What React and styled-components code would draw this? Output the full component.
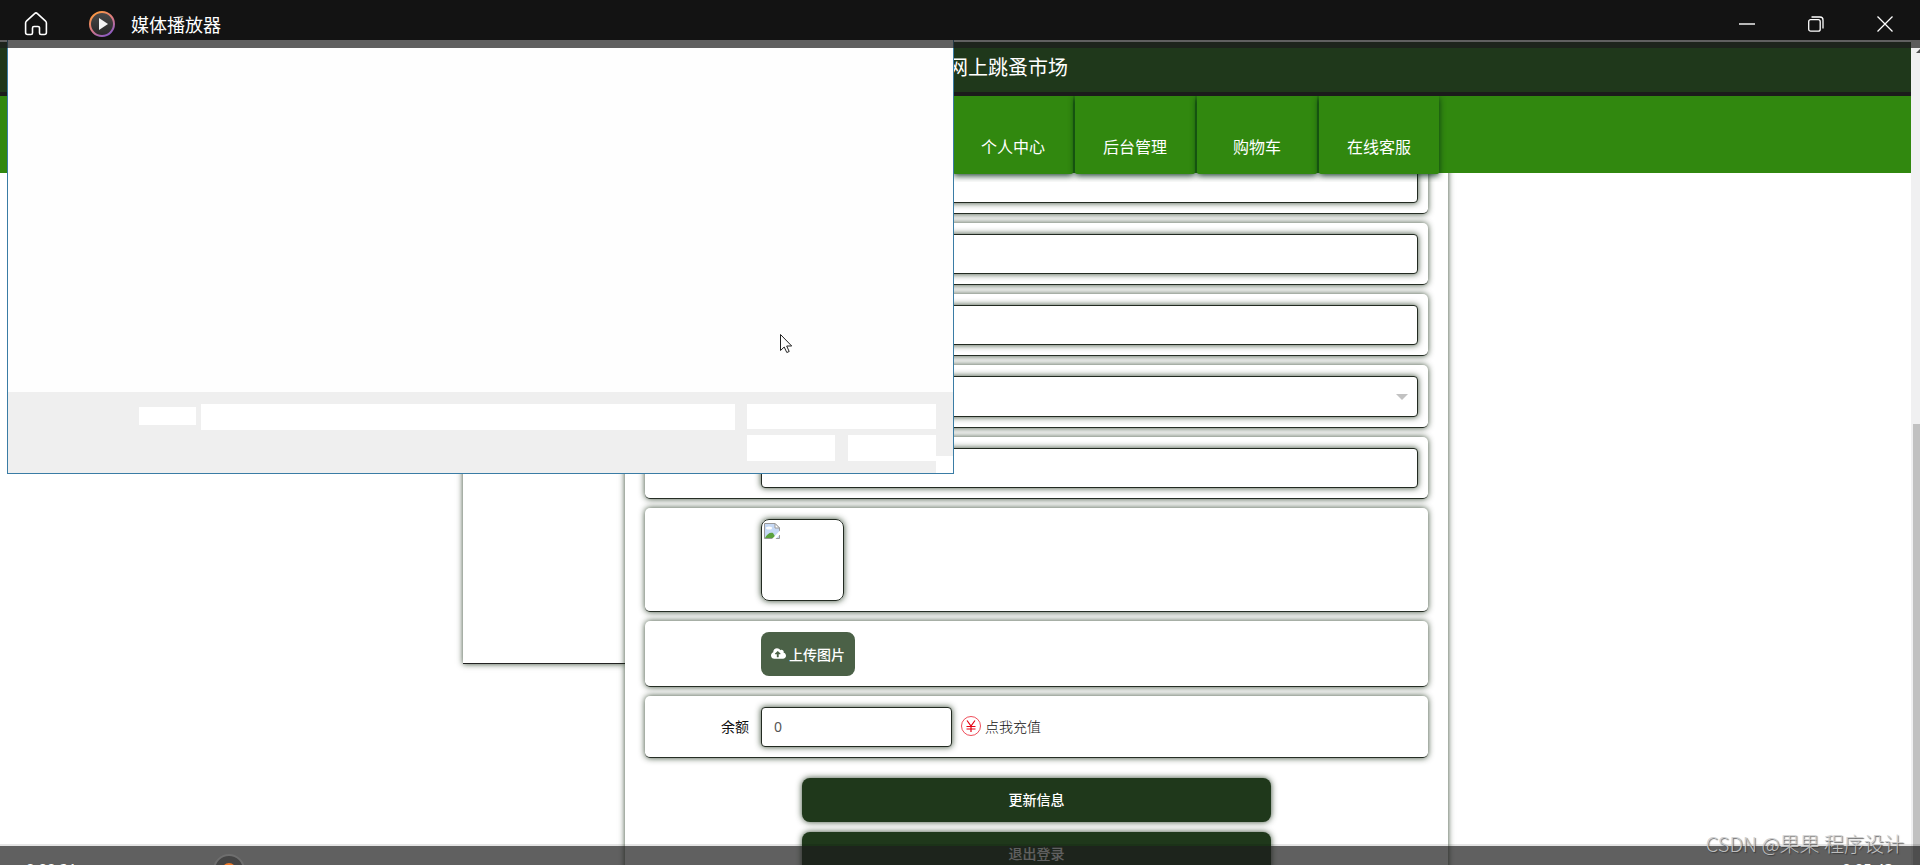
import styled, { createGlobalStyle } from "styled-components";
import { FaCloudUploadAlt } from "react-icons/fa";

const GlobalStyle = createGlobalStyle`
  * {
    box-sizing: border-box;
  }

  body {
    margin: 0;
    background: #131313;
    font-family: "Noto Sans", "Noto Sans CJK SC", sans-serif;
  }

  button, input, select {
    font-family: inherit;
  }
`;

const shadow = "0 0 6px rgba(20, 42, 17, 0.85)";

const Player = styled.div`
  display: flex;
  flex-direction: column;
  height: 100vh;
  overflow: hidden;
`;

const TitleBar = styled.header`
  display: flex;
  align-items: center;
  flex: none;
  height: 40px;
  padding-right: 1px;
  background: #131313;
  color: #fff;
`;

const IconButton = styled.button`
  display: grid;
  place-items: center;
  width: ${({ $wide }) => ($wide ? "69px" : "72px")};
  height: 40px;
  padding: ${({ $wide }) => ($wide ? "7px 0 0" : "8px 0 0")};
  border: none;
  background: none;
  color: #fff;
`;

const AppIcon = styled.svg`
  margin: 8px 16px 0 17px;
`;

const AppName = styled.h1`
  flex: 1;
  margin: 0;
  padding-top: 8px;
  font-family: "Noto Sans CJK SC", sans-serif;
  font-size: 18px;
  font-weight: 400;
  line-height: 30px;
`;

const Video = styled.main`
  position: relative;
  display: flex;
  flex: 1;
  min-height: 0;
  overflow: hidden;
  background: #fff;
`;

const Page = styled.div`
  flex: 1;
  padding-top: 2px;
  background: #fff;
`;

const ScrollTrack = styled.div`
  display: flex;
  flex-direction: column;
  justify-content: space-between;
  width: 9px;
  padding: 9px 0 0 2px;
  background: #f0f0f1;
`;

const ScrollArrow = styled.svg`
  align-self: flex-end;
`;

const ScrollThumb = styled.div`
  height: 54%;
  background: #c1c1c1;
`;

const SiteHeader = styled.header`
  display: flex;
  justify-content: center;
  height: 54px;
  border-bottom: 4px solid #1b1c1b;
  background: #1f381b;
`;

const SiteTitle = styled.h2`
  width: 225px;
  margin: 0;
  color: #fff;
  font-family: "Noto Sans CJK SC", sans-serif;
  font-size: 20px;
  font-weight: 400;
  line-height: 50px;
  text-align: right;
`;

const Nav = styled.nav`
  position: relative;
  z-index: 1;
  height: 77px;
  background: #31880f;
`;

const NavList = styled.ul`
  display: flex;
  justify-content: flex-end;
  gap: 2px;
  max-width: 967px;
  margin: 0 auto;
  padding: 0;
  list-style: none;
`;

const NavLink = styled.a`
  display: block;
  width: 120px;
  height: 78px;
  padding-top: 35px;
  border-radius: 0 0 2px 2px;
  background: #31880f;
  box-shadow: 0 2px 6px rgba(0, 40, 20, 0.85);
  clip-path: inset(0 -8px -8px -8px);
  color: #fff;
  font-family: "Noto Sans CJK SC", sans-serif;
  font-size: 16px;
  line-height: 30px;
  text-align: center;
  text-decoration: none;
`;

const Content = styled.div`
  display: flex;
  align-items: flex-start;
  max-width: 985px;
  margin: -21px auto 0;
`;

const Sidebar = styled.aside`
  flex: 1;
  height: 512px;
  border-bottom: 1px solid #222;
  box-shadow: ${shadow};
`;

const Panel = styled.section`
  position: relative;
  width: 823px;
  padding: 0 20px 60px;
  background: #fff;
  box-shadow: ${shadow};
`;

const Form = styled.form`
  display: flex;
  flex-direction: column;
  gap: 9px;
`;

const Row = styled.div`
  display: flex;
  align-items: center;
  padding: 11px 10px 10px 0;
  border-bottom: 1px solid #262e25;
  border-radius: 5px;
  background: #fff;
  box-shadow: ${shadow};
`;

const Label = styled.label`
  flex: none;
  width: 116px;
  padding: 0 12px 2px 0;
  color: #111;
  font-family: "Noto Sans CJK SC", sans-serif;
  font-size: 14px;
  line-height: 20px;
  text-align: right;
`;

const Field = styled.input`
  flex: ${({ $short }) => ($short ? "none" : "1")};
  width: 191px;
  height: 40px;
  padding: 0 12px 2px;
  border: 1px solid #222a21;
  border-radius: 4px;
  outline: none;
  background: #fff;
  box-shadow: ${shadow};
  color: #555;
  font-size: 14px;
`;

const SelectBox = styled.div`
  display: grid;
  flex: 1;
  align-items: center;
`;

const Select = styled.select`
  grid-area: 1 / 1;
  width: 100%;
  height: 41px;
  border: 1px solid #222a21;
  border-radius: 4px;
  appearance: none;
  background: #fff;
  box-shadow: ${shadow};
`;

const Caret = styled.svg`
  grid-area: 1 / 1;
  justify-self: end;
  margin-right: 10px;
  pointer-events: none;
`;

const Avatar = styled.div`
  width: 83px;
  height: 82px;
  padding: 2px;
  border: 1px solid #222a21;
  border-radius: 8px;
  box-shadow: ${shadow};
`;

const UploadButton = styled.button`
  display: flex;
  align-items: center;
  justify-content: center;
  gap: 3px;
  width: 94px;
  height: 44px;
  padding: 0 0 1px;
  border: none;
  border-radius: 8px;
  background: #4b6147;
  color: #fff;
  font-family: "Noto Sans CJK SC", sans-serif;
  font-size: 14px;
  font-weight: 500;
`;

const Recharge = styled.a`
  display: flex;
  align-items: center;
  gap: 4px;
  margin-left: 9px;
  padding-bottom: 2px;
  color: #111;
  font-family: "Noto Sans CJK SC", sans-serif;
  font-size: 14px;
  font-weight: 300;
  line-height: 20px;
  text-decoration: none;
`;

const Actions = styled.div`
  display: flex;
  flex-direction: column;
  align-items: center;
  gap: 10px;
  padding-top: 11px;
`;

const ActionButton = styled.button`
  width: 60%;
  height: 44px;
  padding: 0 0 2px;
  border: none;
  border-radius: 8px;
  background: #1f381b;
  box-shadow: ${shadow};
  color: #fff;
  font-family: "Noto Sans CJK SC", sans-serif;
  font-size: 14px;
  font-weight: 500;
`;

// The native file picker, floating over the page
const Picker = styled.section`
  position: absolute;
  top: 0;
  left: 7px;
  z-index: 2;
  display: flex;
  flex-direction: column;
  justify-content: flex-end;
  width: 947px;
  height: 434px;
  border: 1px solid #3a7ca5;
  border-top: none;
  background: #fefefe;
`;

const PickerFooter = styled.div`
  display: flex;
  align-items: flex-start;
  height: 81px;
  padding: 12px 17px 0 131px;
  background: #efefef;
`;

const PickerLabel = styled.label`
  width: 57px;
  height: 18px;
  margin: 3px 5px 0 0;
  background: #fff;
`;

const PickerInput = styled.input`
  flex: 1;
  height: 26px;
  margin-right: 12px;
  padding: 0;
  border: none;
  background: #fff;
`;

const PickerActions = styled.div`
  display: grid;
  grid-template-columns: 88px 88px;
  gap: 6px 13px;
`;

const PickerSelect = styled.select`
  grid-column: span 2;
  height: 25px;
  border: none;
  appearance: none;
  background: #fff;
`;

const PickerButton = styled.button`
  height: 26px;
  border: none;
  background: #fff;
`;

const Grip = styled.div`
  position: absolute;
  right: 0;
  bottom: 0;
  width: 17px;
  height: 17px;
  background: #fff;
`;

const Cursor = styled.svg`
  position: absolute;
  top: 294px;
  left: 780px;
  z-index: 3;
`;

const TopShade = styled.div`
  position: absolute;
  inset: 0 0 auto;
  z-index: 4;
  height: 8px;
  background: rgba(28, 29, 28, 0.7);
`;

const Controls = styled.footer`
  position: absolute;
  inset: auto 0 0;
  z-index: 4;
  display: flex;
  justify-content: space-between;
  height: 21px;
  padding: 12px 27px 0 26px;
  overflow: hidden;
  border-top: 2px solid rgba(0, 0, 0, 0.1);
  background: rgba(28, 28, 28, 0.7);
  background-clip: padding-box;
  color: #fff;
  font-family: "Open Sans", sans-serif;
  font-size: 15px;
  line-height: 20px;
`;

const SeekThumb = styled.svg`
  position: absolute;
  top: 8px;
  left: 213px;
`;

const Watermark = styled.div`
  position: absolute;
  right: 16px;
  bottom: 7px;
  z-index: 5;
  color: rgba(205, 205, 205, 0.9);
  font-family: "Noto Sans CJK SC", sans-serif;
  font-size: 20px;
  font-weight: 300;
  line-height: 28px;
  text-shadow: 1px 1px 1px rgba(50, 50, 50, 0.75);
`;

const navItems = ["个人中心", "后台管理", "购物车", "在线客服"];

function HomeIcon() {
  return (
    <svg width="24" height="24" viewBox="0 0 24 24" fill="none" stroke="#fff" strokeWidth="1.6" strokeLinejoin="round">
      <path d="M10.6 1.6a2 2 0 0 1 2.8 0l8.2 7.6c.5.5.8 1.1.8 1.8v9.5a2 2 0 0 1-2 2H17a1.5 1.5 0 0 1-1.5-1.5v-5a1.5 1.5 0 0 0-1.5-1.5h-4A1.5 1.5 0 0 0 8.5 16v5A1.5 1.5 0 0 1 7 22.5H3.6a2 2 0 0 1-2-2V11c0-.7.3-1.3.8-1.8z" />
    </svg>
  );
}

function PlayIcon() {
  return (
    <AppIcon width="26" height="26" viewBox="0 0 26 26">
      <defs>
        <linearGradient id="ring" x1="0.2" y1="0" x2="0.8" y2="1">
          <stop offset="0" stopColor="#ff9a3c" />
          <stop offset="0.5" stopColor="#d97a84" />
          <stop offset="1" stopColor="#8458c8" />
        </linearGradient>
        <linearGradient id="disc" x1="0" y1="0" x2="0" y2="1">
          <stop offset="0" stopColor="#4a4a4a" />
          <stop offset="1" stopColor="#262626" />
        </linearGradient>
      </defs>
      <circle cx="13" cy="13" r="12" fill="url(#disc)" stroke="url(#ring)" strokeWidth="2" />
      <path d="M10 7l9 6-9 6z" fill="#f4f4f4" />
    </AppIcon>
  );
}

function BrokenImage() {
  return (
    <svg width="16" height="16" viewBox="0 0 16 16" role="img" aria-label="头像">
      <path d="M.5.5H11L15.5 5v10.5H.5z" fill="#c6d9f5" stroke="#9a9a9a" />
      <path d="M11 .5V5h4.5z" fill="#fff" stroke="#9a9a9a" />
      <ellipse cx="5" cy="5" rx="3" ry="1.5" fill="#fff" />
      <path d="M1 15c2-4 5-6 8-5l3 5z" fill="#5ba23e" />
      <path d="M16 7.5L8 16h3.5l4.5-4.5z" fill="#fff" />
    </svg>
  );
}

function YenIcon() {
  return (
    <svg width="20" height="20" viewBox="0 0 20 20" fill="none" stroke="#e60012">
      <circle cx="10" cy="10" r="9.5" strokeWidth="0.7" />
      <path d="M6 4.5l4 5.5 4-5.5M5.5 10.5h9M5.5 13h9M10 10v6" strokeWidth="1.2" />
    </svg>
  );
}

function FilePicker() {
  return (
    <Picker role="dialog" aria-label="打开">
      <PickerFooter>
        <PickerLabel htmlFor="file-name" />
        <PickerInput id="file-name" aria-label="文件名" />
        <PickerActions>
          <PickerSelect aria-label="文件类型" />
          <PickerButton type="button" aria-label="打开" />
          <PickerButton type="button" aria-label="取消" />
        </PickerActions>
      </PickerFooter>
      <Grip />
    </Picker>
  );
}

function ProfileForm() {
  return (
    <Form>
      <Row>
        <Label htmlFor="field-1" />
        <Field id="field-1" />
      </Row>
      <Row>
        <Label htmlFor="field-2" />
        <Field id="field-2" />
      </Row>
      <Row>
        <Label htmlFor="field-3" />
        <Field id="field-3" />
      </Row>
      <Row>
        <Label htmlFor="field-4" />
        <SelectBox>
          <Select id="field-4" />
          <Caret width="12" height="6" viewBox="0 0 12 6">
            <path d="M0 0h12L6 6z" fill="#c2c2c2" />
          </Caret>
        </SelectBox>
      </Row>
      <Row>
        <Label htmlFor="field-5" />
        <Field id="field-5" />
      </Row>
      <Row>
        <Label as="span" />
        <Avatar>
          <BrokenImage />
        </Avatar>
      </Row>
      <Row>
        <Label as="span" />
        <UploadButton type="button">
          <FaCloudUploadAlt size={15} />
          上传图片
        </UploadButton>
      </Row>
      <Row>
        <Label htmlFor="balance">余额</Label>
        <Field id="balance" $short defaultValue="0" />
        <Recharge href="#recharge">
          <YenIcon />
          点我充值
        </Recharge>
      </Row>
      <Actions>
        <ActionButton type="button">更新信息</ActionButton>
        <ActionButton type="button">退出登录</ActionButton>
      </Actions>
    </Form>
  );
}

export default function App() {
  return (
    <Player>
      <GlobalStyle />
      <TitleBar>
        <IconButton type="button" aria-label="主页">
          <HomeIcon />
        </IconButton>
        <PlayIcon />
        <AppName>媒体播放器</AppName>
        <IconButton type="button" $wide aria-label="最小化">
          <svg width="16" height="16" viewBox="0 0 16 16" stroke="#fff">
            <path d="M0 8h16" strokeWidth="1.4" />
          </svg>
        </IconButton>
        <IconButton type="button" $wide aria-label="还原">
          <svg width="16" height="16" viewBox="0 0 16 16" fill="none" stroke="#fff" strokeWidth="1.3">
            <rect x="0.7" y="3.7" width="11.5" height="11.5" rx="2" />
            <path d="M3.5 1H12a3 3 0 0 1 3 3v8.5" />
          </svg>
        </IconButton>
        <IconButton type="button" $wide aria-label="关闭">
          <svg width="16" height="16" viewBox="0 0 16 16" stroke="#fff" strokeWidth="1.3">
            <path d="M.5.5l15 15M15.5.5l-15 15" />
          </svg>
        </IconButton>
      </TitleBar>
      <Video>
        <Page>
          <SiteHeader>
            <SiteTitle>网上跳蚤市场</SiteTitle>
          </SiteHeader>
          <Nav>
            <NavList>
              {navItems.map((item) => (
                <li key={item}>
                  <NavLink href="#">{item}</NavLink>
                </li>
              ))}
            </NavList>
          </Nav>
          <Content>
            <Sidebar />
            <Panel>
              <ProfileForm />
            </Panel>
          </Content>
        </Page>
        <ScrollTrack>
          <ScrollArrow width="4" height="4" viewBox="0 0 4 4">
            <path d="M4 0v4H0z" fill="#505050" />
          </ScrollArrow>
          <ScrollThumb />
        </ScrollTrack>
        <FilePicker />
        <Cursor width="13" height="20" viewBox="0 0 13 20">
          <path d="M.5.5v16L4.200 13l2.600 5.500 2.400-1-2.500-5.500h5z" fill="#fff" stroke="#222" />
        </Cursor>
        <TopShade />
        <Controls>
          <span>0:00:21</span>
          <span>0:05:43</span>
          <SeekThumb width="32" height="32" viewBox="0 0 32 32">
            <circle cx="16" cy="16" r="15" fill="#454545" stroke="#6e6e6e" strokeWidth="2" />
            <circle cx="16" cy="16" r="7" fill="#ee7a2a" />
          </SeekThumb>
        </Controls>
        <Watermark>CSDN @果果 程序设计</Watermark>
      </Video>
    </Player>
  );
}
